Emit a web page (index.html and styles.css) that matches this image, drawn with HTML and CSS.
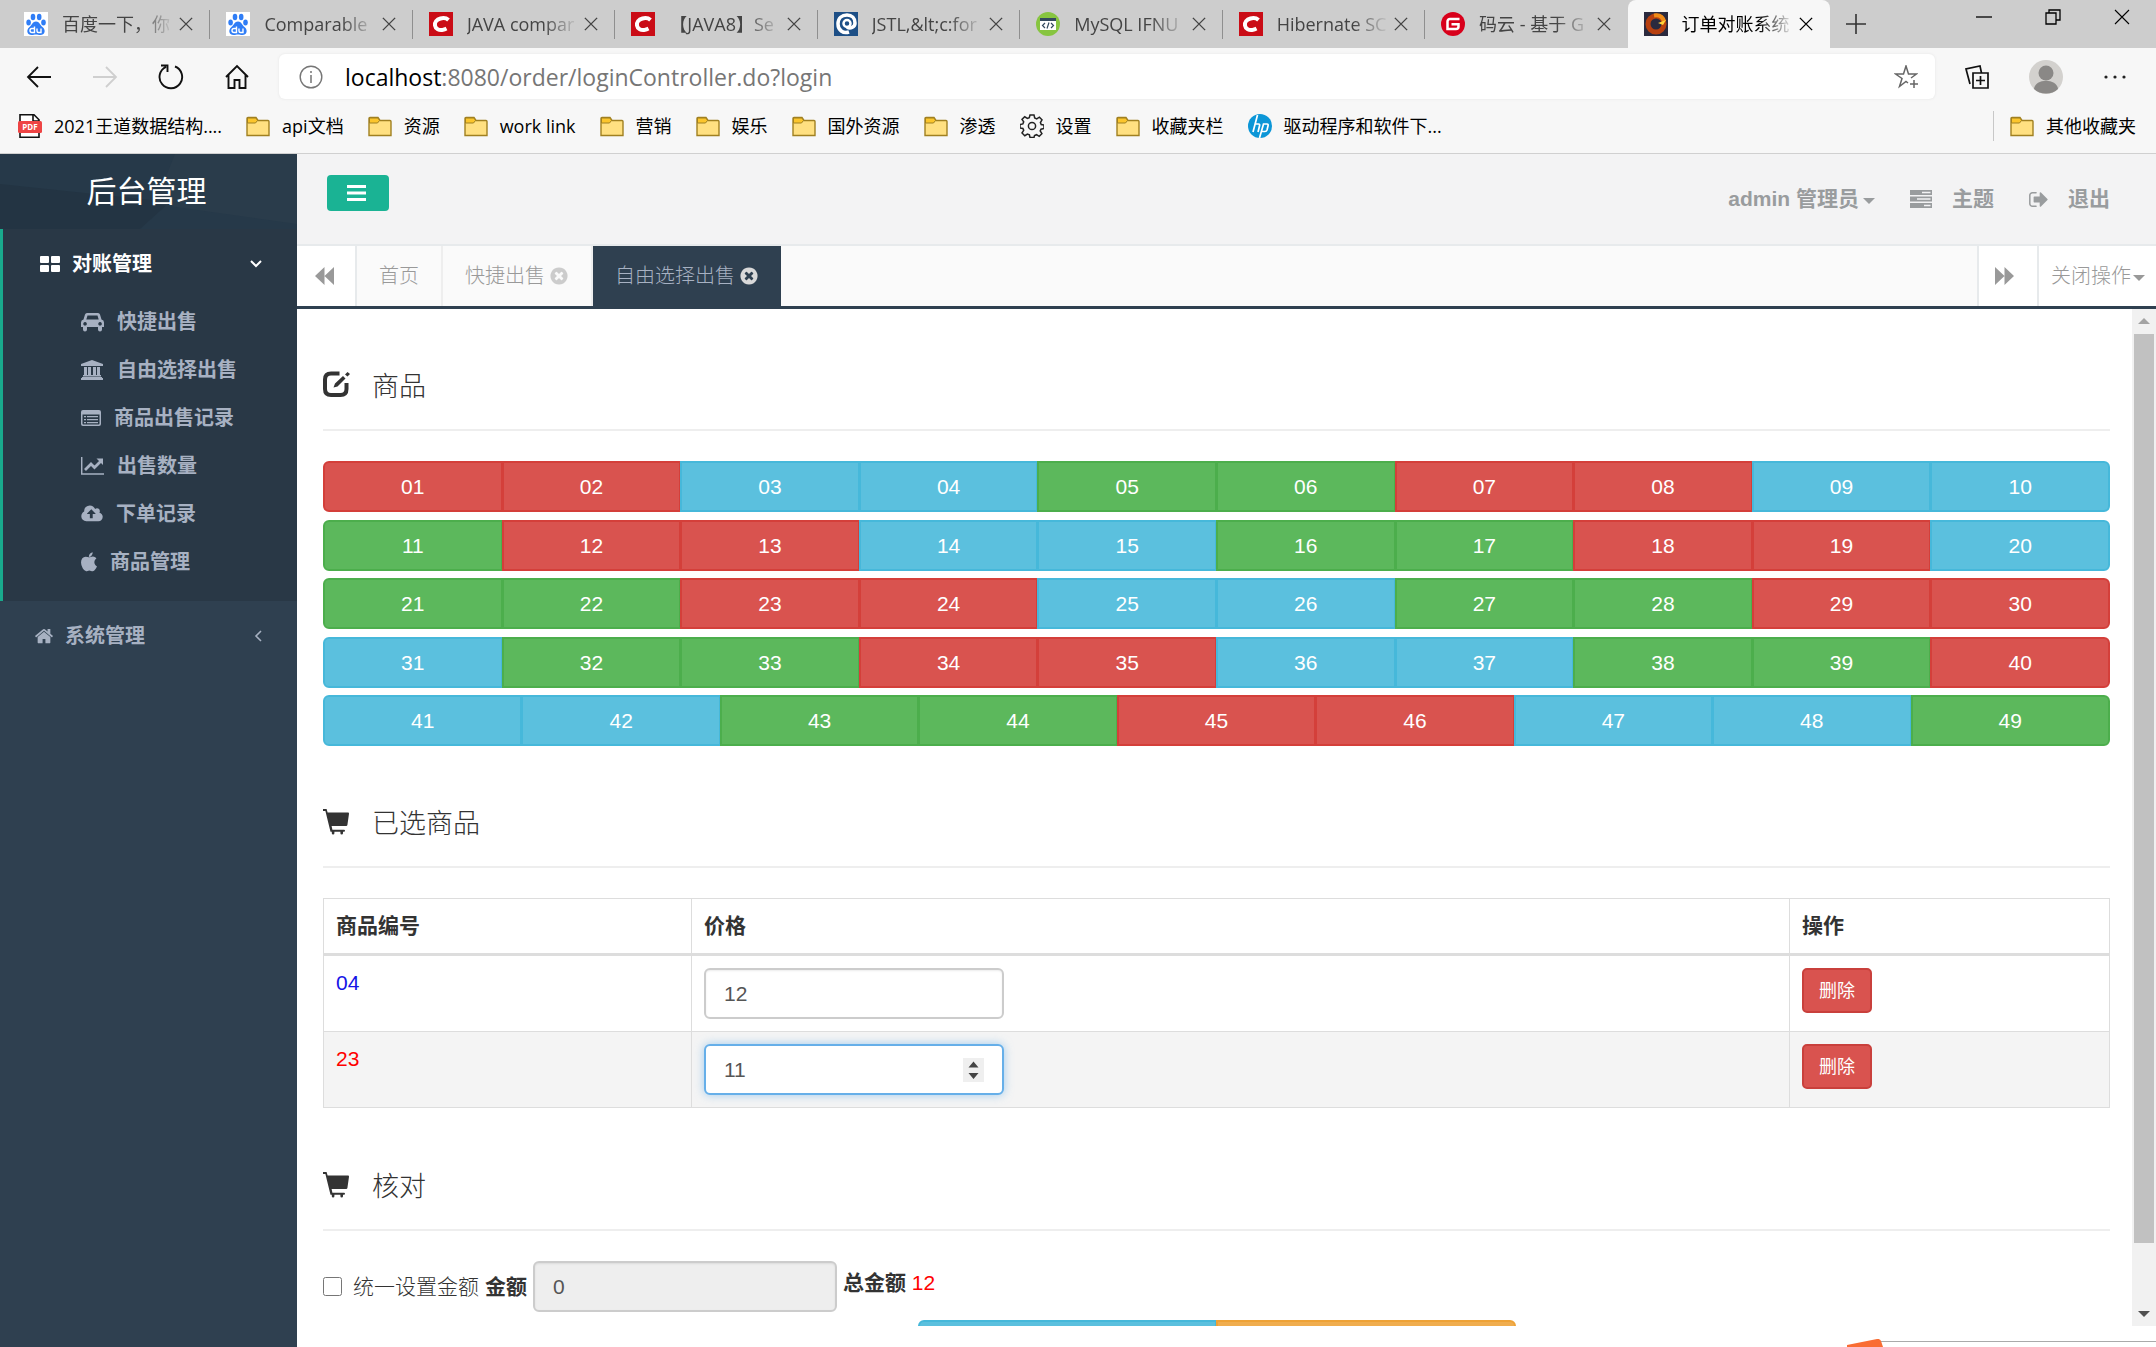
FILE: index.html
```html
<!DOCTYPE html>
<html lang="zh-CN">
<head>
<meta charset="utf-8">
<title>订单对账系统</title>
<link rel="stylesheet" href="styles.css">
</head>
<body>
<svg class="defs" aria-hidden="true">
  <symbol id="x" viewBox="0 0 16 16"><path d="M1 1l14 14M15 1L1 15" fill="none" stroke="currentColor" stroke-width="1.6"/></symbol>
  <symbol id="folder" viewBox="0 0 24 24"><path d="M1 21.500V4.500a1 1 0 0 1 1-1h8l2 3h10a1 1 0 0 1 1 1v14z" fill="#ffe081" stroke="#a08021" stroke-width="1.400"/><path d="M1.500 4h8.500l1.500 2.500-2 2.500h-8z" fill="#fbc52c" stroke="#a08021"/></symbol>
  <symbol id="baidu" viewBox="0 0 24 24"><path fill="#fff" d="M0 0h24v24H0z"/><g fill="#2f7df6"><ellipse cx="4.600" cy="10.500" rx="2.300" ry="3"/><ellipse cx="9" cy="5" rx="2.300" ry="3.200"/><ellipse cx="15.200" cy="5" rx="2.300" ry="3.200"/><ellipse cx="19.500" cy="10.500" rx="2.300" ry="3"/><path d="M12 9.500c3.500 0 4 3.500 6.500 5.500 4 3.500 2 8-2 8-2 0-3-.5-4.500-.5s-2.500.5-4.500.5c-4 0-6-4.500-2-8C8 13 8.500 9.500 12 9.500z"/></g><path d="M10.500 14.500v6H8a2 2 0 0 1 0-4h2.500M13 16.500v2.500a1.500 1.500 0 0 0 1.500 1.500H17v-4" fill="none" stroke="#fff" stroke-width="1.400"/></symbol>
  <symbol id="csdn" viewBox="0 0 24 24"><path fill="#ca0c16" d="M0 0h24v24H0z"/><path d="M19.500 8c-2-1.800-5-2.300-8-1.500-4 1-6 4-5.500 7 .5 3.500 4 5 8 4.300 1.500-.3 2.500-.8 3.500-1.300" fill="none" stroke="#fff" stroke-width="4"/></symbol>
  <symbol id="closed" viewBox="0 0 1792 1792"><path fill="currentColor" d="M1277 1122q0-26-19-45l-181-181 181-181q19-19 19-45 0-27-19-46l-90-90q-19-19-46-19-26 0-45 19l-181 181-181-181q-19-19-45-19-27 0-46 19l-90 90q-19 19-19 46 0 26 19 45l181 181-181 181q-19 19-19 45 0 27 19 46l90 90q19 19 46 19 26 0 45-19l181-181 181 181q19 19 45 19 27 0 46-19l90-90q19-19 19-46zm387-226q0 209-103 385.500t-279.500 279.500-385.500 103-385.500-103-279.500-279.500-103-385.500 103-385.500 279.500-279.500 385.500-103 385.500 103 279.500 279.500 103 385.500z"/></symbol>
  <symbol id="cart" viewBox="0 0 27 27"><path fill="currentColor" d="M0 1h3.600l1 3.500H25q1.200 0 1 1.200l-1.600 11.300q-.2 1-1.200 1H8.600l.8 3.800H21q1 0 1 1t-1 1h-1v1.500q0 1.200-1.300 1.200t-1.300-1.200v-1.500h-6v1.500q0 1.200-1.300 1.200T8.800 25.300v-1.500H7.500L2.400 3H0z"/></symbol>
</svg>

<header class="browser">
  <div class="tabstrip">
    <div class="btabs">
      <div class="btab"><svg class="fav"><use href="#baidu"/></svg><span class="btitle">百度一下，你</span><button class="bclose" aria-label="关闭"><svg><use href="#x"/></svg></button></div>
      <div class="btab"><svg class="fav"><use href="#baidu"/></svg><span class="btitle">Comparable</span><button class="bclose" aria-label="关闭"><svg><use href="#x"/></svg></button></div>
      <div class="btab"><svg class="fav"><use href="#csdn"/></svg><span class="btitle">JAVA compar</span><button class="bclose" aria-label="关闭"><svg><use href="#x"/></svg></button></div>
      <div class="btab"><svg class="fav"><use href="#csdn"/></svg><span class="btitle">【JAVA8】Se</span><button class="bclose" aria-label="关闭"><svg><use href="#x"/></svg></button></div>
      <div class="btab"><svg class="fav" viewBox="0 0 24 24"><path fill="#1d4f86" d="M0 0h24v24H0z"/><path d="M15 20c-6 2-11-2-11-8s4-9 9-9 8 3.500 8 8-5 6-8 4" fill="none" stroke="#fff" stroke-width="3.500"/><circle cx="13" cy="11.500" r="3.500" fill="none" stroke="#fff" stroke-width="2.500"/></svg><span class="btitle">JSTL,&amp;lt;c:for</span><button class="bclose" aria-label="关闭"><svg><use href="#x"/></svg></button></div>
      <div class="btab"><svg class="fav" viewBox="0 0 24 24"><circle cx="12" cy="12" r="12" fill="#87c540"/><path fill="#fff" d="M4 6h16v12H4z"/><path fill="#34495e" d="M4 6h16v3H4z"/><path d="M9 11l-2.500 2.500L9 16M15 11l2.500 2.500L15 16M13 10.500l-2 6" fill="none" stroke="#34495e" stroke-width="1.200"/></svg><span class="btitle">MySQL IFNU</span><button class="bclose" aria-label="关闭"><svg><use href="#x"/></svg></button></div>
      <div class="btab"><svg class="fav"><use href="#csdn"/></svg><span class="btitle">Hibernate SC</span><button class="bclose" aria-label="关闭"><svg><use href="#x"/></svg></button></div>
      <div class="btab"><svg class="fav" viewBox="0 0 24 24"><circle cx="12" cy="12" r="12" fill="#d8001b"/><path d="M18.500 7H9a2.500 2.500 0 0 0-2.500 2.500V17H15a2.500 2.500 0 0 0 2.500-2.500v-2.300H10.500" fill="none" stroke="#fff" stroke-width="2.500"/></svg><span class="btitle">码云 - 基于 G</span><button class="bclose" aria-label="关闭"><svg><use href="#x"/></svg></button></div>
      <div class="btab current"><svg class="fav" viewBox="0 0 24 24"><path fill="#2b2a3e" d="M0 0h24v24H0z"/><circle cx="12" cy="12" r="8" fill="none" stroke="#b8400f" stroke-width="5"/><path d="M10 3.500c6-1 9 2 10 6" fill="none" stroke="#ef8b17" stroke-width="4"/><path d="M14 11l8-3-3 5z" fill="#ffd43a"/></svg><span class="btitle">订单对账系统</span><button class="bclose" aria-label="关闭"><svg><use href="#x"/></svg></button></div>
    </div>
    <button class="newtab" aria-label="新建标签页"><svg viewBox="0 0 20 20"><path d="M10 0v20M0 10h20" stroke="#333" stroke-width="1.600"/></svg></button>
    <div class="winctl">
      <button aria-label="最小化"><svg viewBox="0 0 16 16"><path d="M0 8h16" stroke="#000" stroke-width="1.300"/></svg></button>
      <button aria-label="还原"><svg viewBox="0 0 16 16"><path d="M1 4h10v11H1zM4 4V1h11v10h-4" fill="none" stroke="#000" stroke-width="1.300"/></svg></button>
      <button aria-label="关闭窗口"><svg viewBox="0 0 16 16"><path d="M1 1l14 14M15 1L1 15" stroke="#000" stroke-width="1.100"/></svg></button>
    </div>
  </div>
  <div class="toolbar">
    <div class="navbtns">
      <button aria-label="后退"><svg viewBox="0 0 26 26"><path d="M12 3L2 13l10 10M2 13h23" fill="none" stroke="#111" stroke-width="1.800"/></svg></button>
      <button aria-label="前进"><svg viewBox="0 0 26 26"><path d="M14 3l10 10-10 10M24 13H1" fill="none" stroke="#cfcfcf" stroke-width="1.800"/></svg></button>
      <button aria-label="刷新"><svg viewBox="0 0 26 26"><path d="M17 2.500a11.300 11.300 0 1 1-9 .3M3 1.500h6.500V8" fill="none" stroke="#111" stroke-width="1.900"/></svg></button>
      <button aria-label="主页"><svg viewBox="0 0 26 26"><path d="M2 13L13 2l11 11M4.500 11v13h6v-8h5v8h6V11" fill="none" stroke="#111" stroke-width="1.900"/></svg></button>
    </div>
    <div class="address">
      <svg class="i24" viewBox="0 0 24 24"><circle cx="12" cy="12" r="10.800" fill="none" stroke="#767676" stroke-width="1.400"/><path d="M12 10v8M12 6v2" stroke="#767676" stroke-width="1.500"/></svg>
      <span class="url"><b>localhost</b>:8080/order/loginController.do?login</span>
      <button aria-label="添加到收藏夹"><svg class="i24" viewBox="0 0 24 24"><path d="M14 18l-2-1.500-6.500 5L8 13.500 1.500 9H9.500L12 1l2.500 8h8L17 13" fill="none" stroke="#666" stroke-width="1.500"/><path d="M20 15v8M16 19h8" stroke="#666" stroke-width="1.500"/></svg></button>
    </div>
    <div class="tools">
      <button aria-label="集锦"><svg class="i24" viewBox="0 0 24 24"><path d="M8 8h15v15H8zM15.500 11v9M11 15.500h9M5 19L1 4l14-3 1.500 7" fill="none" stroke="#111" stroke-width="1.700"/></svg></button>
      <button aria-label="个人资料"><svg class="avatar" viewBox="0 0 34 34"><circle cx="17" cy="17" r="17" fill="#d3d1ce"/><circle cx="17" cy="13" r="7.500" fill="#8a8886"/><path d="M5 29c1-11 23-11 24 0-6 6-18 6-24 0z" fill="#8a8886"/></svg></button>
      <button aria-label="更多"><svg class="i24" viewBox="0 0 24 24"><g fill="#222"><circle cx="3" cy="12" r="1.600"/><circle cx="12" cy="12" r="1.600"/><circle cx="21" cy="12" r="1.600"/></g></svg></button>
    </div>
  </div>
  <nav class="bookmarks">
    <a href="#"><svg viewBox="0 0 24 24"><path d="M2 .8h14l5 5v17.400H2z" fill="#fff" stroke="#111" stroke-width="1.600"/><path d="M15 1v6h6" fill="none" stroke="#111" stroke-width="1.600"/><rect y="7" width="24" height="12" rx="1.500" fill="#ee4444"/><text x="12" y="16" text-anchor="middle" class="badge">PDF</text></svg>2021王道数据结构....</a>
    <a href="#"><svg><use href="#folder"/></svg>api文档</a>
    <a href="#"><svg><use href="#folder"/></svg>资源</a>
    <a href="#"><svg><use href="#folder"/></svg>work link</a>
    <a href="#"><svg><use href="#folder"/></svg>营销</a>
    <a href="#"><svg><use href="#folder"/></svg>娱乐</a>
    <a href="#"><svg><use href="#folder"/></svg>国外资源</a>
    <a href="#"><svg><use href="#folder"/></svg>渗透</a>
    <a href="#"><svg viewBox="0 0 24 24"><path d="M10 1h4l.7 3 2 .9 2.700-1.700 2.600 2.600L20.400 8.500l.8 2 2.800.5v3.500l-3 .7-.8 1.800 1.700 2.700-2.700 2.700-2.700-1.700-2 .8L14 23.500h-4l-.6-2.700-2-.8-2.600 1.700-2.800-2.700 1.700-2.700-.8-1.800L0 14v-3.500l2.900-.6.8-2L2 5.400l2.700-2.600L7.400 4.500l1.900-.8z" fill="none" stroke="#222" stroke-width="1.500"/><circle cx="12" cy="12" r="3.600" fill="none" stroke="#222" stroke-width="1.500"/></svg>设置</a>
    <a href="#"><svg><use href="#folder"/></svg>收藏夹栏</a>
    <a href="#"><svg viewBox="0 0 24 24"><circle cx="12" cy="12" r="12" fill="#0c96d7"/><path d="M9.500 1L5 18M7 10h3.500q1.500 0 1 2L10 18M19 10h-3.500L11.500 24M19 10q1.500 0 1 2l-1 4q-.5 1.500-2 1.500h-3" fill="none" stroke="#fff" stroke-width="1.700"/></svg>驱动程序和软件下...</a>
    <a href="#" class="others"><svg><use href="#folder"/></svg>其他收藏夹</a>
  </nav>
</header>

<div class="app">
  <aside class="sidebar">
    <div class="brand"><svg class="facets" viewBox="0 0 297 75" preserveAspectRatio="none"><path d="M0 30l170 18-30 27H0z" fill="#233443"/><path d="M175 0L155 50l142 20V0z" fill="#2a3c4b"/></svg><span>后台管理</span></div>
    <section class="group open">
      <a href="#" class="ghead"><svg width="20" height="16" viewBox="0 0 20 16"><g fill="currentColor"><rect width="9" height="7" rx="1"/><rect x="11" width="9" height="7" rx="1"/><rect y="9" width="9" height="7" rx="1"/><rect x="11" y="9" width="9" height="7" rx="1"/></g></svg>对账管理<svg class="chev" width="12" height="8" viewBox="0 0 12 8"><path d="M1 1l5 5 5-5" fill="none" stroke="currentColor" stroke-width="2"/></svg></a>
      <a href="#" class="sub"><svg width="23" height="20" viewBox="0 0 23 20"><path fill="currentColor" fill-rule="evenodd" d="M6 1h11q1.500 0 2 1.500l1.500 5q2.500.5 2.500 3V15h-2v2.500a1.800 1.800 0 0 1-4 0V15H6v2.500a1.800 1.800 0 0 1-4 0V15H0v-4.500q0-2.500 2.500-3l1.500-5Q4.500 1 6 1zm.5 2.500l-1.200 4h12.400l-1.200-4zM4 10a1.800 1.800 0 1 0 .1 0zm15 0a1.800 1.800 0 1 0 .1 0z"/></svg>快捷出售</a>
      <a href="#" class="sub"><svg width="23" height="20" viewBox="0 0 23 20"><path fill="currentColor" d="M11 0l11 4v2H0V4zM3 7h3v8h1V7h3v8h2V7h3v8h1V7h3v8h1v1.500H2V15h1zM1 17h20v1h1v2H0v-2h1z"/></svg>自由选择出售</a>
      <a href="#" class="sub"><svg width="20" height="16" viewBox="0 0 20 16"><path fill="currentColor" fill-rule="evenodd" d="M2 0h16q2 0 2 2v12q0 2-2 2H2q-2 0-2-2V2q0-2 2-2zM1.500 4.500v9q0 1 1 1h15q1 0 1-1v-9zM3 6h2v1.300H3zm3 0h11v1.300H6zM3 9h2v1.300H3zm3 0h11v1.300H6zM3 12h2v1.300H3zm3 0h11v1.300H6z"/></svg>商品出售记录</a>
      <a href="#" class="sub"><svg width="23" height="18" viewBox="0 0 23 18"><path d="M.7 0v17H23" fill="none" stroke="currentColor" stroke-width="1.500"/><path d="M4 13l6-6 3.500 3.500L20 4" fill="none" stroke="currentColor" stroke-width="2.800"/><path fill="currentColor" d="M15.500 1.500H22V8z"/></svg>出售数量</a>
      <a href="#" class="sub"><svg width="22" height="20" viewBox="0 0 1920 1792"><path fill="currentColor" d="M1280 864q0-14-9-23l-352-352q-9-9-23-9t-23 9l-351 351q-10 12-10 24 0 14 9 23t23 9h224v352q0 13 9.500 22.500t22.500 9.500h192q13 0 22.500-9.500t9.500-22.500v-352h224q13 0 22.500-9.500t9.500-22.500zm640 288q0 159-112.500 271.500t-271.500 112.500h-1088q-185 0-316.500-131.500t-131.500-316.500q0-130 70-240t188-165q-2-30-2-43 0-212 150-362t362-150q156 0 285.500 87t188.500 231q71-62 166-62 106 0 181 75t75 181q0 76-41 138 130 31 213.500 135.500t83.500 238.500z"/></svg>下单记录</a>
      <a href="#" class="sub"><svg width="16" height="20" viewBox="190 0 1400 1700"><path fill="currentColor" d="M1585 1215q-39 125-123 250-129 196-257 196-49 0-140-32-86-32-151-32-61 0-142 33-81 34-132 34-152 0-301-259-147-261-147-503 0-228 113-374 113-144 284-144 72 0 177 30 104 30 138 30 45 0 143-34 102-34 173-34 119 0 213 65 52 36 104 100-79 67-114 118-65 94-65 207 0 124 69 223t158 126zm-376-1173q0 61-29 136-30 75-93 138-54 54-108 72-37 11-104 17 3-149 78-257 74-107 250-148 1 3 2.500 11t2.500 11q0 4 .5 10t.5 10z"/></svg>商品管理</a>
    </section>
    <section class="group">
      <a href="#" class="ghead"><svg width="18" height="16" viewBox="80 200 1632 1380"><path fill="currentColor" d="M1472 992v480q0 26-19 45t-45 19h-384v-384h-256v384h-384q-26 0-45-19t-19-45v-480q0-1 .5-3t.5-3l575-474 575 474q1 2 1 6zm223-69l-62 74q-8 9-21 11h-3q-13 0-21-7l-692-577-692 577q-12 8-24 7-13-2-21-11l-62-74q-8-10-7-23.500t11-21.500l719-599q32-26 76-26t76 26l244 204v-195q0-14 9-23t23-9h192q14 0 23 9t9 23v408l219 182q10 8 11 21.500t-7 23.500z"/></svg>系统管理<svg class="chev" width="8" height="12" viewBox="0 0 8 12"><path d="M7 1L2 6l5 5" fill="none" stroke="currentColor" stroke-width="1.600"/></svg></a>
    </section>
  </aside>

  <div class="main">
    <div class="topbar">
      <button class="toggle" aria-label="菜单"><svg width="19" height="16" viewBox="0 0 19 16"><path d="M0 1.500h19M0 8h19M0 14.500h19" stroke="#fff" stroke-width="3"/></svg></button>
      <nav class="user">
        <a href="#" class="who">admin 管理员<i class="caret"></i></a>
        <a href="#"><svg width="22" height="18" viewBox="0 0 22 18"><path fill="currentColor" fill-rule="evenodd" d="M0 0h22v5H0zm12 1.800v1.400h8.500V1.800zM0 6.500h22v5H0zm7 1.800v1.400h13.500V8.300zM0 13h22v5H0zm14 1.800v1.400h6.500v-1.400z"/></svg>主题</a>
        <a href="#"><svg width="19" height="17" viewBox="60 190 1600 1410"><path fill="currentColor" d="M704 1440q0 4 1 20t.5 26.500-3 23.500-10 19.500-20.500 6.500h-320q-119 0-203.500-84.500t-84.500-203.500v-704q0-119 84.500-203.500t203.500-84.500h320q13 0 22.500 9.500t9.500 22.500q0 4 1 20t.5 26.500-3 23.500-10 19.500-20.500 6.500h-320q-66 0-113 47t-47 113v704q0 66 47 113t113 47h312l11.500 1 11.500 3 8 5.500 7 9 2 13.500zm928-544q0 26-19 45l-544 544q-19 19-45 19t-45-19-19-45v-288h-448q-26 0-45-19t-19-45v-384q0-26 19-45t45-19h448v-288q0-26 19-45t45-19 45 19l544 544q19 19 19 45z"/></svg>退出</a>
      </nav>
    </div>
    <div class="pagetabs">
      <button class="roll left" aria-label="向左"><svg width="19" height="18" viewBox="0 0 19 18"><path fill="currentColor" d="M9.500 0v18L0 9zM19 0v18L9.500 9z"/></svg></button>
      <a href="#" class="ptab">首页</a>
      <a href="#" class="ptab">快捷出售<svg class="pclose"><use href="#closed"/></svg></a>
      <a href="#" class="ptab on">自由选择出售<svg class="pclose"><use href="#closed"/></svg></a>
      <button class="roll right" aria-label="向右"><svg width="19" height="18" viewBox="0 0 19 18"><path fill="currentColor" d="M0 0v18l9.500-9zM9.500 0v18L19 9z"/></svg></button>
      <button class="closeops">关闭操作<i class="caret"></i></button>
    </div>
    <div class="frame">
      <main class="content">
        <h2 class="title"><svg viewBox="0 0 27 27"><path d="M16.500 2.500H8Q2 2.500 2 8.500v9.500Q2 24 8 24h9.500q6 0 6-6v-6" fill="none" stroke="currentColor" stroke-width="4"/><path d="M10.500 16.500l1.500-4 8-7.500 2.500 2.500-8 8zM22 3.500L24.500 1 27 3l-2.500 2.500z" fill="currentColor"/></svg>商品</h2>
        <div class="board">
          <div class="row"><button class="r">01</button><button class="r">02</button><button class="b">03</button><button class="b">04</button><button class="g">05</button><button class="g">06</button><button class="r">07</button><button class="r">08</button><button class="b">09</button><button class="b">10</button></div>
          <div class="row"><button class="g">11</button><button class="r">12</button><button class="r">13</button><button class="b">14</button><button class="b">15</button><button class="g">16</button><button class="g">17</button><button class="r">18</button><button class="r">19</button><button class="b">20</button></div>
          <div class="row"><button class="g">21</button><button class="g">22</button><button class="r">23</button><button class="r">24</button><button class="b">25</button><button class="b">26</button><button class="g">27</button><button class="g">28</button><button class="r">29</button><button class="r">30</button></div>
          <div class="row"><button class="b">31</button><button class="g">32</button><button class="g">33</button><button class="r">34</button><button class="r">35</button><button class="b">36</button><button class="b">37</button><button class="g">38</button><button class="g">39</button><button class="r">40</button></div>
          <div class="row"><button class="b">41</button><button class="b">42</button><button class="g">43</button><button class="g">44</button><button class="r">45</button><button class="r">46</button><button class="b">47</button><button class="b">48</button><button class="g">49</button></div>
        </div>

        <h2 class="title"><svg><use href="#cart"/></svg>已选商品</h2>
        <table class="goods">
          <colgroup><col class="c-id"><col class="c-price"><col class="c-op"></colgroup>
          <thead><tr><th>商品编号</th><th>价格</th><th>操作</th></tr></thead>
          <tbody>
            <tr><td class="blue">04</td><td><input class="field" type="number" value="12" aria-label="04 价格"></td><td><button class="del">删除</button></td></tr>
            <tr><td class="red">23</td><td><div class="spinbox"><input class="field focus" type="number" value="11" aria-label="23 价格"><svg class="spin" viewBox="0 0 21 24"><path fill="#efefef" d="M0 0h21v24H0z"/><path fill="#444" d="M5.500 9.500l5-6 5 6zM5.500 15l5 6 5-6z"/></svg></div></td><td><button class="del">删除</button></td></tr>
          </tbody>
        </table>

        <h2 class="title"><svg><use href="#cart"/></svg>核对</h2>
        <div class="check">
          <input type="checkbox" id="same"><label for="same">统一设置金额</label>
          <label class="strong amount" for="amount">金额</label>
          <input class="field" id="amount" type="number" value="0" disabled>
          <span class="total"><strong>总金额</strong> <span class="red">12</span></span>
        </div>
        <div class="actions"><button class="b" aria-label="提交"></button><button class="o" aria-label="重置"></button></div>
      </main>
      <div class="scrollbar">
        <svg viewBox="0 0 24 25"><path d="M6 15l6-6 6 6z" fill="#a3a3a3"/></svg>
        <div class="track"><div class="thumb"></div></div>
        <svg viewBox="0 0 24 25"><path d="M6 10l6 6 6-6z" fill="#505050"/></svg>
      </div>
    </div>
    <footer class="foot"><div class="popup"></div><svg class="ribbon" viewBox="0 0 36 8"><path d="M0 8V6L30 0q3-.5 4 2l2 6z" fill="#f96d33"/></svg></footer>
  </div>
</div>
</body>
</html>
```
FILE: styles.css
```css
* { box-sizing: border-box; }
body {
  margin: 0;
  height: 100vh;
  display: flex;
  flex-direction: column;
  overflow: hidden;
  font-family: "Liberation Sans", "Noto Sans CJK SC", sans-serif;
  font-size: 21px;
  line-height: 30px;
  color: #333;
  background: #fff;
}
button { font: inherit; border: 0; padding: 0; background: none; color: inherit; }
a { color: inherit; text-decoration: none; }
svg { display: block; flex: none; }
.defs { display: none; }

/* Browser window */
.browser {
  flex: none;
  font-family: "Open Sans", "Noto Sans CJK SC", sans-serif;
  font-size: 18px;
  background: #f7f7f7;
  border-bottom: 1px solid #d0d0d0;
}
.tabstrip { display: flex; height: 48px; padding-left: 8px; background: #cdcdcd; }
.btabs { display: grid; grid-template-columns: repeat(9, 1fr); flex: 0 1 1822px; min-width: 0; }
.btab {
  position: relative;
  min-width: 0;
  display: flex;
  align-items: center;
  padding: 0 17px 0 16px;
  color: #444;
}
.btab::after { content: ""; position: absolute; right: 0; top: 10px; width: 1px; height: 29px; background: #8f8f8f; }
.btab.current { background: #f7f7f7; border-radius: 8px 8px 0 0; color: #000; }
.btab.current::after, .btab:nth-child(8)::after { display: none; }
.fav { width: 24px; height: 24px; }
.btitle {
  flex: 1;
  min-width: 0;
  margin: 0 8px 0 14px;
  white-space: nowrap;
  -webkit-mask-image: linear-gradient(90deg, #000 70%, rgba(0, 0, 0, .15) 98%);
  mask-image: linear-gradient(90deg, #000 70%, rgba(0, 0, 0, .15) 98%);
}
.bclose svg { width: 14px; height: 14px; color: inherit; }
.newtab { margin-left: 16px; }
.newtab svg { width: 20px; height: 20px; }
.winctl { margin-left: auto; display: flex; gap: 53px; padding: 9px 26px 0 0; align-items: flex-start; }
.winctl svg { width: 16px; height: 16px; }

.toolbar { display: flex; align-items: center; height: 57px; padding: 0 29px 0 26px; }
.navbtns { display: flex; gap: 40px; margin-right: 29px; }
.navbtns svg { width: 26px; height: 26px; }
.address {
  flex: 1;
  display: flex;
  align-items: center;
  height: 45px;
  padding: 0 17px 0 20px;
  background: #fff;
  border-radius: 6px;
  box-shadow: 0 0 3px #e4e4e4;
}
.url { flex: 1; margin-left: 22px; font-size: 23px; color: #767676; }
.url b { font-weight: 400; color: #000; }
.i24 { width: 24px; height: 24px; }
.tools { display: flex; align-items: center; gap: 40px; margin-left: 30px; }
.avatar { width: 34px; height: 34px; }

.bookmarks { display: flex; align-items: center; gap: 24px; height: 48px; padding: 0 20px 6px 18px; color: #000; }
.bookmarks a { display: flex; align-items: center; gap: 12px; white-space: nowrap; }
.bookmarks svg { width: 24px; height: 24px; }
.badge { font: bold 8px "Open Sans", sans-serif; fill: #fff; }
.bookmarks .others { margin-left: auto; padding-left: 16px; border-left: 1px solid #c8c8c8; }

/* Admin page */
.app { flex: 1; min-height: 0; display: flex; }
.sidebar { flex: none; width: 297px; background: #2f4050; color: #a7b1c2; font-size: 20px; font-weight: 700; }
.brand {
  position: relative;
  height: 75px;
  padding-right: 4px;
  background: #263949;
  color: #fff;
  font-size: 30px;
  font-weight: 400;
  line-height: 76px;
  text-align: center;
}
.brand span { position: relative; }
.facets { position: absolute; inset: 0; width: 100%; height: 100%; }
.group { padding-left: 3px; }
.group.open { background: #293846; border-left: 3px solid #19aa8d; padding: 0 0 15px 0; }
.ghead { display: flex; align-items: center; gap: 12px; height: 69px; padding: 0 35px 0 32px; }
.open .ghead { padding-left: 37px; color: #fff; }
.chev { margin-left: auto; }
.sub { display: flex; align-items: center; gap: 13px; height: 48px; padding-left: 78px; }

.main { flex: 1; min-width: 0; display: flex; flex-direction: column; }
.topbar {
  display: flex;
  justify-content: space-between;
  height: 92px;
  padding: 21px 46px 0 30px;
  background: #f3f3f4;
  border-bottom: 2px solid #e7eaec;
}
.toggle { display: flex; align-items: center; justify-content: center; width: 62px; height: 36px; padding-right: 4px; border-radius: 4px; background: #1ab394; }
.user { display: flex; gap: 35px; padding-top: 9px; color: #999c9e; font-weight: 700; }
.user a { display: flex; align-items: center; gap: 20px; height: 30px; }
.user .who { gap: 4px; }
.caret { width: 0; height: 0; border: 6px solid transparent; border-top-color: currentColor; border-bottom: 0; margin-top: 4px; }

.pagetabs { display: flex; height: 63px; background: #fafafa; border-bottom: 3px solid #2f4050; color: #999; font-size: 20px; font-weight: 300; }
.roll { width: 60px; display: flex; align-items: center; justify-content: center; padding-right: 4px; background: #fff; border: solid #e7eaec; }
.roll.left { border-width: 0 2px 0 0; }
.roll.right { margin-left: auto; border-width: 0 2px; width: 62px; padding-right: 8px; }
.ptab { display: flex; align-items: center; gap: 4px; padding: 0 22px; border-right: 2px solid #eee; }
.ptab.on { background: #2f4050; color: #a7b1c2; border: 0; }
.pclose { width: 20px; height: 20px; color: #ccc; }
.on .pclose { color: #d9d9d9; }
.closeops { display: flex; align-items: center; gap: 2px; padding: 0 11px 0 12px; background: #fff; }

.frame { flex: 1; min-height: 0; display: flex; }
.content { flex: 1; min-width: 0; overflow: hidden; padding: 55px 22px 0 26px; }
.title {
  display: flex;
  align-items: center;
  gap: 22px;
  height: 67px;
  margin: 0 0 30px;
  padding-bottom: 20px;
  border-bottom: 2px solid #eee;
  font-size: 27px;
  font-weight: 300;
}
.title svg { width: 27px; height: 27px; margin-bottom: 4px; }
.board { margin-bottom: 55px; }
.row { display: flex; margin-bottom: 8px; }
.row:nth-child(even) { margin-bottom: 7px; }
.row:last-child { margin-bottom: 0; }
.row button, .actions button {
  flex: 1;
  height: 51px;
  margin-left: -1px;
  border: 2px solid;
  color: #fff;
}
.row button:first-child, .actions button:first-child { margin-left: 0; border-radius: 6px 0 0 6px; }
.row button:last-child, .actions button:last-child { border-radius: 0 6px 6px 0; }
button.r { background: #d9534f; border-color: #d43f3a; }
button.b { background: #5bc0de; border-color: #46b8da; }
button.g { background: #5cb85c; border-color: #4cae4c; }
button.o { background: #f0ad4e; border-color: #eea236; }

.goods { width: 100%; table-layout: fixed; border-collapse: collapse; margin-bottom: 56px; }
.c-id { width: 368px; }
.c-op { width: 320px; }
.goods th, .goods td { border: 1px solid #ddd; padding: 12px; text-align: left; vertical-align: top; }
.goods th { border-bottom-width: 3px; }
.goods tbody tr:nth-child(even) { background: #f4f4f4; }
.blue { color: #00f; }
.red { color: #f00; }
.goods .blue { color: #1414e6; }
.field {
  display: block;
  width: 300px;
  height: 51px;
  padding: 0 18px;
  border: 2px solid #ccc;
  border-radius: 6px;
  background: #fff;
  box-shadow: inset 0 1px 2px rgba(0, 0, 0, .08);
  color: #555;
  font: inherit;
  appearance: textfield;
  -moz-appearance: textfield;
}
.field::-webkit-inner-spin-button { display: none; }
.field:disabled { background: #eee; width: 304px; }
.focus { border-color: #66afe9; box-shadow: 0 0 10px rgba(102, 175, 233, .6); }
.spinbox { position: relative; width: 300px; }
.spin { position: absolute; right: 20px; top: 14px; width: 21px; height: 24px; }
.del { display: block; height: 45px; padding: 0 15px; border: 2px solid #c9403c; border-radius: 5px; background: #d9534f; color: #fff; font-size: 18px; }

.check { display: flex; align-items: center; height: 51px; }
.check input[type="checkbox"] { width: 19px; height: 19px; margin: 0 11px 0 0; }
.check label { font-weight: 300; }
.check .strong { font-weight: 700; }
.amount { margin: 0 6px; }
.total { margin-left: 6px; padding-bottom: 8px; }
.actions { display: flex; width: 598px; margin: 8px auto 0; }

.scrollbar { flex: none; display: flex; flex-direction: column; width: 24px; background: #f1f1f1; }
.scrollbar svg { width: 24px; height: 25px; }
.track { flex: 1; padding: 0 2px; }
.thumb { height: 94%; background: #c1c1c1; }

.foot { position: relative; flex: none; height: 21px; }
.popup { position: absolute; right: 0; bottom: 0; width: 276px; height: 6px; border-top: 1px solid #aaa; }
.ribbon { position: absolute; right: 273px; bottom: 0; width: 36px; height: 8px; }
```
